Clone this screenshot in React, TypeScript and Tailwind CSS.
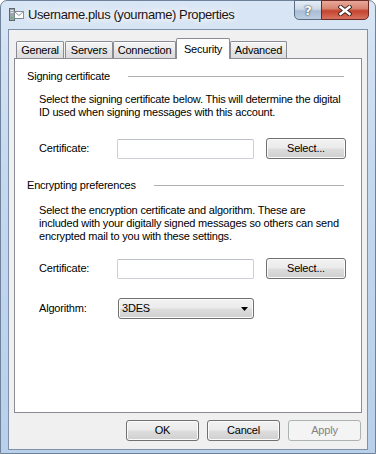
import type { ReactNode } from "react";

// Win7 style "Properties" dialog, Security tab
const ui = "font-['Liberation_Sans',Arial,sans-serif] text-[11px] tracking-[-0.2px] text-black";

const tabs = [
  { label: "General", cls: "w-[48px]" },
  { label: "Servers", cls: "w-[48px] ml-px" },
  { label: "Connection", cls: "w-[63px]" },
  { label: "Security", cls: "w-[54px]", active: true },
  { label: "Advanced", cls: "w-[57px]" },
];

const btnFace =
  "bg-[linear-gradient(to_bottom,#f2f2f2_0%,#ebebeb_48%,#dddddd_52%,#cfcfcf_100%)] border border-[#707070] rounded-[3px] shadow-[inset_0_0_0_1px_#fbfbfb]";

function Button({ children, className = "", disabled }: { children: ReactNode; className?: string; disabled?: boolean }) {
  if (disabled) {
    return (
      <div className={`h-[21px] flex items-center justify-center rounded-[3px] border border-[#adb2b5] bg-[#f4f4f4] text-[#838383] ${className}`}>
        {children}
      </div>
    );
  }
  return <div className={`h-[21px] flex items-center justify-center ${btnFace} ${className}`}>{children}</div>;
}

function GroupHeader({ title, className = "" }: { title: string; className?: string }) {
  return (
    <div className={`h-[15px] flex items-center pl-[12px] pr-[17px] ${className}`}>
      <span className="whitespace-nowrap">{title}</span>
      <div className="flex-1 h-px bg-[#b0b0b0] ml-[18px]" />
    </div>
  );
}

function CertRow({ className = "" }: { className?: string }) {
  return (
    <div className={`h-[21px] flex items-center pl-[24px] ${className}`}>
      <span className="w-[78px]">Certificate:</span>
      <div className="w-[137px] h-[20px] rounded-[2px] border border-[#ccd0d6] border-t-[#bcc1c8] bg-white" />
      <Button className="w-[80px] ml-[12px]">Select...</Button>
    </div>
  );
}

function WinIcon() {
  return (
    <svg width="15" height="14" viewBox="0 0 15 14">
      <rect x="0.5" y="1.5" width="5" height="12" fill="#9ea4ab" stroke="#5f666e" />
      <rect x="1.5" y="3" width="3" height="1" fill="#e6e8ea" />
      <rect x="1.5" y="5" width="3" height="1" fill="#e6e8ea" />
      <rect x="2" y="10" width="2" height="1.5" fill="#49c15a" />
      <rect x="5.5" y="4.5" width="9" height="7" fill="#ffffff" stroke="#7d8793" />
      <path d="M5.8 4.8 L10 8.5 L14.2 4.8" fill="none" stroke="#8a949f" />
    </svg>
  );
}

export default function App() {
  return (
    <div className={`w-[376px] h-[454px] flex flex-col px-[7px] pb-[3px] rounded-t-[7px] border border-[#6f829b] bg-[linear-gradient(to_bottom,#d9e6f5_0%,#c4d8ee_40%,#b9d0ea_100%)] ${ui}`}>
      {/* title bar */}
      <div className="h-[28px] flex items-start">
        <div className="mt-[6px] ml-px">
          <WinIcon />
        </div>
        <div className="mt-[6px] ml-[4px] text-[13px] tracking-[-0.4px] leading-[16px] text-[#1c1414] [text-shadow:0_0_6px_#ffffff,0_0_10px_#ffffff,0_0_14px_#f4f8fc]">
          Username.plus (yourname) Properties
        </div>
        <div className="ml-auto mr-[-1px] -mt-px flex">
          <div className="w-[28px] h-[20px] flex items-center justify-center rounded-bl-[5px] border border-[#5a6c84] bg-[linear-gradient(to_bottom,#e6eef7_0%,#cdd9e7_45%,#aabdd4_55%,#bccde0_100%)]">
            <span className="font-['DejaVu_Sans'] font-bold text-[13px] leading-none text-white [text-shadow:0_0_1px_#2e3b4c,0_0_2px_#2e3b4c]">?</span>
          </div>
          <div className="w-[48px] h-[20px] -ml-px flex items-center justify-center rounded-br-[5px] border border-[#6b2a24] bg-[linear-gradient(to_bottom,#e9a99b_0%,#d88471_42%,#c4442f_55%,#d77260_100%)]">
            <svg width="14" height="11" viewBox="0 0 14 11">
              <path d="M2.5 2 L11.5 9 M11.5 2 L2.5 9" stroke="#3a1f1c" strokeWidth="4.2" strokeLinecap="square" />
              <path d="M2.5 2 L11.5 9 M11.5 2 L2.5 9" stroke="#ffffff" strokeWidth="2.4" strokeLinecap="square" />
            </svg>
          </div>
        </div>
      </div>

      {/* client area */}
      <div className="flex-1 border border-[#7d91ab] bg-[#f0f0f0] pt-[7px] px-[5px] flex flex-col">
        <div className="h-[21px] flex items-end pl-[2px] relative z-10">
          {tabs.map((t) =>
            t.active ? (
              <div
                key={t.label}
                className={`${t.cls} h-[21px] -mb-px flex justify-center pt-[4px] leading-[13px] bg-white border border-b-0 border-[#898c95] rounded-t-[2px]`}
              >
                {t.label}
              </div>
            ) : (
              <div
                key={t.label}
                className={`${t.cls} h-[17px] flex items-center justify-center leading-[13px] border border-b-0 border-[#898c95] rounded-t-[2px] bg-[linear-gradient(to_bottom,#f4f4f4_0%,#ececec_50%,#e4e4e4_52%,#dcdcdc_100%)] shadow-[inset_0_1px_0_#fcfcfc]`}
              >
                {t.label}
              </div>
            )
          )}
        </div>
        <div className="h-[355px] border border-[#898c95] bg-white flex flex-col">
          <GroupHeader title="Signing certificate" className="mt-[10px]" />
          <div className="mt-[9px] pl-[24px] leading-[13px] whitespace-nowrap">
            Select the signing certificate below. This will determine the digital
            <br />
            ID used when signing messages with this account.
          </div>
          <CertRow className="mt-[19px]" />

          <GroupHeader title="Encrypting preferences" className="mt-[19px]" />
          <div className="mt-[11px] pl-[24px] leading-[13px] whitespace-nowrap">
            Select the encryption certificate and algorithm. These are
            <br />
            included with your digitally signed messages so others can send
            <br />
            encrypted mail to you with these settings.
          </div>
          <CertRow className="mt-[15px]" />

          <div className="mt-[19px] h-[21px] flex items-center pl-[24px]">
            <span className="w-[79px]">Algorithm:</span>
            <div className={`w-[136px] h-[21px] flex items-center pl-[3px] pr-[5px] ${btnFace}`}>
              <span className="flex-1">3DES</span>
              <svg width="7" height="4" viewBox="0 0 7 4">
                <path d="M0 0 H7 L3.5 4 Z" fill="#000" />
              </svg>
            </div>
          </div>
        </div>

        <div className="mt-[7px] flex justify-end gap-[8px] pr-px">
          <Button className="w-[73px]">OK</Button>
          <Button className="w-[73px]">Cancel</Button>
          <Button className="w-[73px]" disabled>
            Apply
          </Button>
        </div>
      </div>
    </div>
  );
}
